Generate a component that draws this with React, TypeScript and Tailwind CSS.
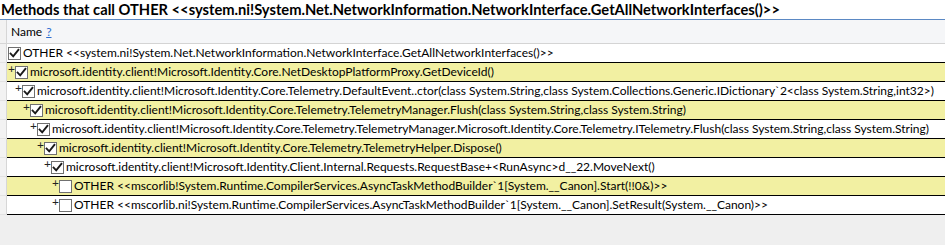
import React from "react";

type Row = { level: number; checked: boolean; text: string; yellow: boolean; pl: string };

const rows: Row[] = [
  { level: 0, checked: true, yellow: false, pl: "pl-[1px]", text: "OTHER <<system.ni!System.Net.NetworkInformation.NetworkInterface.GetAllNetworkInterfaces()>>" },
  { level: 1, checked: true, yellow: true, pl: "pl-[1px]", text: "microsoft.identity.client!Microsoft.Identity.Core.NetDesktopPlatformProxy.GetDeviceId()" },
  { level: 2, checked: true, yellow: false, pl: "pl-[8px]", text: "microsoft.identity.client!Microsoft.Identity.Core.Telemetry.DefaultEvent..ctor(class System.String,class System.Collections.Generic.IDictionary`2<class System.String,int32>)" },
  { level: 3, checked: true, yellow: true, pl: "pl-[16px]", text: "microsoft.identity.client!Microsoft.Identity.Core.Telemetry.TelemetryManager.Flush(class System.String,class System.String)" },
  { level: 4, checked: true, yellow: false, pl: "pl-[23px]", text: "microsoft.identity.client!Microsoft.Identity.Core.Telemetry.TelemetryManager.Microsoft.Identity.Core.Telemetry.ITelemetry.Flush(class System.String,class System.String)" },
  { level: 5, checked: true, yellow: true, pl: "pl-[30px]", text: "microsoft.identity.client!Microsoft.Identity.Core.Telemetry.TelemetryHelper.Dispose()" },
  { level: 6, checked: true, yellow: false, pl: "pl-[37px]", text: "microsoft.identity.client!Microsoft.Identity.Client.Internal.Requests.RequestBase+<RunAsync>d__22.MoveNext()" },
  { level: 7, checked: false, yellow: true, pl: "pl-[45px]", text: "OTHER <<mscorlib!System.Runtime.CompilerServices.AsyncTaskMethodBuilder`1[System.__Canon].Start(!!0&)>>" },
  { level: 7, checked: false, yellow: false, pl: "pl-[45px]", text: "OTHER <<mscorlib.ni!System.Runtime.CompilerServices.AsyncTaskMethodBuilder`1[System.__Canon].SetResult(System.__Canon)>>" },
];

function Check({ checked }: { checked: boolean }) {
  return (
    <svg width="13" height="13" viewBox="0 0 13 13" className="shrink-0">
      <rect x="0.5" y="0.5" width="12" height="12" fill="#ffffff" stroke="#707070" />
      {checked && (
        <path d="M2.6 6.6 L5.2 9.4 L10.4 2.8" fill="none" stroke="#1a1a1a" strokeWidth="1.9" strokeLinecap="square" strokeLinejoin="miter" />
      )}
    </svg>
  );
}

export default function App() {
  return (
    <div className="w-[945px] h-[245px] bg-[#efefef] flex flex-col overflow-hidden text-black font-['Lato','Noto_Sans',sans-serif]">
      <div className="h-[20px] bg-white border-b border-[#5b89c4] flex items-center pl-[1px] text-[14.7px] font-bold leading-none whitespace-nowrap">
        Methods that call OTHER &lt;&lt;system.ni!System.Net.NetworkInformation.NetworkInterface.GetAllNetworkInterfaces()&gt;&gt;
      </div>
      <div className="flex h-[24px]">
        <div className="w-[7px] shrink-0 bg-[#f2f2f2] border-r border-[#d6d6d6] border-b border-b-[#d6d6d6]" />
        <div className="flex-1 bg-[#f5f6f8] border-b border-[#d4d4d4] flex items-center pl-[4px] text-[12px] whitespace-nowrap">
          <span>Name</span>
          <span className="ml-[4px] text-[#2b6cd0] underline">?</span>
        </div>
      </div>
      {rows.map((r, i) => (
        <div key={i} className="flex h-[19px]">
          <div className="w-[7px] shrink-0 bg-[#f2f2f2] border-r border-[#d6d6d6] border-b border-b-[#e2e2e2]" />
          <div
            className={`flex-1 min-w-0 border-b border-black flex items-center whitespace-nowrap text-[12px] leading-none ${r.pl} ${r.yellow ? "bg-[#f2f0a2]" : "bg-white"}`}
          >
            {r.level > 0 && <span className="w-[7px] shrink-0 text-[12px] leading-none -mt-[6px] text-[#222]">+</span>}
            <Check checked={r.checked} />
            <span className="ml-[2px]">{r.text}</span>
          </div>
        </div>
      ))}
    </div>
  );
}
